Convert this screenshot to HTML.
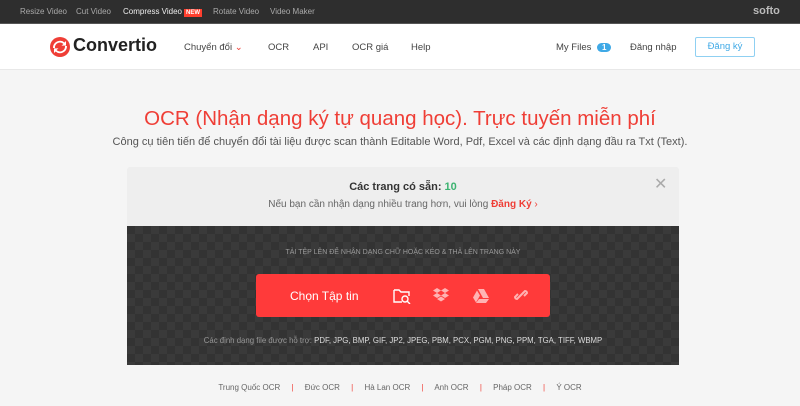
<!DOCTYPE html>
<html><head><meta charset="utf-8"><style>
*{margin:0;padding:0;box-sizing:border-box}
body{width:800px;height:406px;overflow:hidden;background:#f5f5f5;font-family:"Liberation Sans","DejaVu Sans",sans-serif;position:relative}
.top{position:absolute;left:0;top:0;width:800px;height:24px;background:#2e2e2e;border-bottom:1px solid #555;font-size:8px;color:#aaa}
.top span{position:absolute;top:7px}
.new{background:#ff3f2e;color:#fff;font-size:6px;padding:1px 2px;font-weight:bold;margin-left:2px}
.hdr{position:absolute;left:0;top:24px;width:800px;height:46px;background:#fff;border-bottom:1px solid #e8e8e8;font-size:9.5px;color:#444}
.hdr span{position:absolute;top:18px}
.abs{position:absolute}
</style></head><body>
<div class="top">
<span style="left:20px">Resize Video</span>
<span style="left:76px">Cut Video</span>
<span style="left:123px;color:#eee">Compress Video<b class="new">NEW</b></span>
<span style="left:213px">Rotate Video</span>
<span style="left:270px">Video Maker</span>
<span style="left:753px;top:5px;font-size:11px;font-weight:bold;color:#bbb">softo</span>
</div>
<div class="hdr">
<svg class="abs" style="left:50px;top:13px" width="20" height="20" viewBox="0 0 20 20"><circle cx="10" cy="10" r="10" fill="#ef3e36"/><path d="M5 11a5 5 0 0 1 8.5-4l-2 1.6h4.5V4l-1.5 1.5A7 7 0 0 0 3 11z M15 9a5 5 0 0 1-8.5 4l2-1.6H4V16l1.5-1.5A7 7 0 0 0 17 9z" fill="#fff"/></svg>
<span style="left:73px;top:11px;font-size:18px;font-weight:bold;color:#222">Convertio</span>
<span style="left:184px">Chuyển đổi <b style="color:#ef3e36;font-weight:normal">⌄</b></span>
<span style="left:268px">OCR</span>
<span style="left:313px">API</span>
<span style="left:352px">OCR giá</span>
<span style="left:411px">Help</span>
<span style="left:556px">My Files <b style="display:inline-block;background:#3fa9e6;color:#fff;border-radius:7px;padding:0 5px;font-size:8px;margin-left:3px">1</b></span>
<span style="left:630px">Đăng nhập</span>
<div class="abs" style="left:695px;top:13px;width:60px;height:20px;border:1px solid #8fd0f2;border-radius:2px;color:#3fa9e6;text-align:center;line-height:18px;font-size:9.5px">Đăng ký</div>
</div>
<div class="abs" style="left:0;top:107px;width:800px;text-align:center;font-size:20.5px;color:#ef3e36">OCR (Nhận dạng ký tự quang học). Trực tuyến miễn phí</div>
<div class="abs" style="left:0;top:136px;width:800px;text-align:center;font-size:11px;color:#555">Công cụ tiên tiến để chuyển đổi tài liệu được scan thành Editable Word, Pdf, Excel và các định dạng đầu ra Txt (Text).</div>
<div class="abs" style="left:127px;top:167px;width:552px;height:60px;background:#eeeeee;border-radius:3px 3px 0 0"></div>
<div class="abs" style="left:127px;top:181px;width:552px;text-align:center;font-size:11px;font-weight:bold;color:#333">Các trang có sẵn: <span style="color:#3cb371">10</span></div>
<div class="abs" style="left:127px;top:199px;width:552px;text-align:center;font-size:10px;color:#666">Nếu bạn cần nhận dạng nhiều trang hơn, vui lòng <b style="color:#ef3e36">Đăng Ký</b> <span style="color:#ef3e36">›</span></div>
<div class="abs" style="left:654px;top:174px;font-size:16px;color:#aaa">✕</div>
<div class="abs" style="left:127px;top:226px;width:552px;height:139px;background-color:#333;background-image:linear-gradient(45deg,#3a3a3a 25%,transparent 25%,transparent 75%,#3a3a3a 75%),linear-gradient(45deg,#3a3a3a 25%,transparent 25%,transparent 75%,#3a3a3a 75%);background-size:16px 16px;background-position:0 0,8px 8px"></div>
<div class="abs" style="left:127px;top:249px;width:552px;text-align:center;font-size:7px;color:#999">TẢI TỆP LÊN ĐỂ NHẬN DẠNG CHỮ HOẶC KÉO &amp; THẢ LÊN TRANG NÀY</div>
<div class="abs" style="left:256px;top:274px;width:294px;height:43px;background:#ff3a3a;border-radius:3px"></div>
<div class="abs" style="left:290px;top:289px;font-size:12px;color:#fff">Chọn Tập tin</div>
<svg class="abs" style="left:393px;top:288px" width="18" height="16" viewBox="0 0 18 16" fill="none" stroke="#fff" stroke-width="1.4"><path d="M1 2h5l2 2h8v4M1 2v12h8"/><circle cx="12" cy="11" r="3"/><path d="M14 13l3 3"/></svg>
<svg class="abs" style="left:433px;top:288px" width="16" height="15" viewBox="0 0 16 15" fill="#ffb3b3"><path d="M4 0l4 2.5L4 5 0 2.5zM12 0l4 2.5L12 5 8 2.5zM4 5l4 2.5L4 10 0 7.5zM12 5l4 2.5L12 10 8 7.5zM4 11l4-2.5 4 2.5-4 2.5z"/></svg>
<svg class="abs" style="left:473px;top:289px" width="16" height="14" viewBox="0 0 16 14" fill="#ffb3b3"><path d="M5 0h6l5 9h-6zM4 1.5l3 5-4 7-3-5zM6 10h10l-3 4H3z"/></svg>
<svg class="abs" style="left:513px;top:287px" width="16" height="16" viewBox="0 0 16 16" fill="none" stroke="#ffb3b3" stroke-width="2"><path d="M7 9l-3 3a2 2 0 0 1-2-2l3-3M9 7l3-3a2 2 0 0 1 2 2l-3 3M6 10l4-4"/></svg>
<div class="abs" style="left:127px;top:336px;width:552px;text-align:center;font-size:7.8px;color:#999">Các định dạng file được hỗ trợ: <span style="color:#ddd">PDF, JPG, BMP, GIF, JP2, JPEG, PBM, PCX, PGM, PNG, PPM, TGA, TIFF, WBMP</span></div>
<div class="abs" style="left:0;top:383px;width:800px;text-align:center;font-size:8px;color:#666">
Trung Quốc OCR <span style="color:#ef3e36;margin:0 9px">|</span> Đức OCR <span style="color:#ef3e36;margin:0 9px">|</span> Hà Lan OCR <span style="color:#ef3e36;margin:0 9px">|</span> Anh OCR <span style="color:#ef3e36;margin:0 9px">|</span> Pháp OCR <span style="color:#ef3e36;margin:0 9px">|</span> Ý OCR</div>
</body></html>
